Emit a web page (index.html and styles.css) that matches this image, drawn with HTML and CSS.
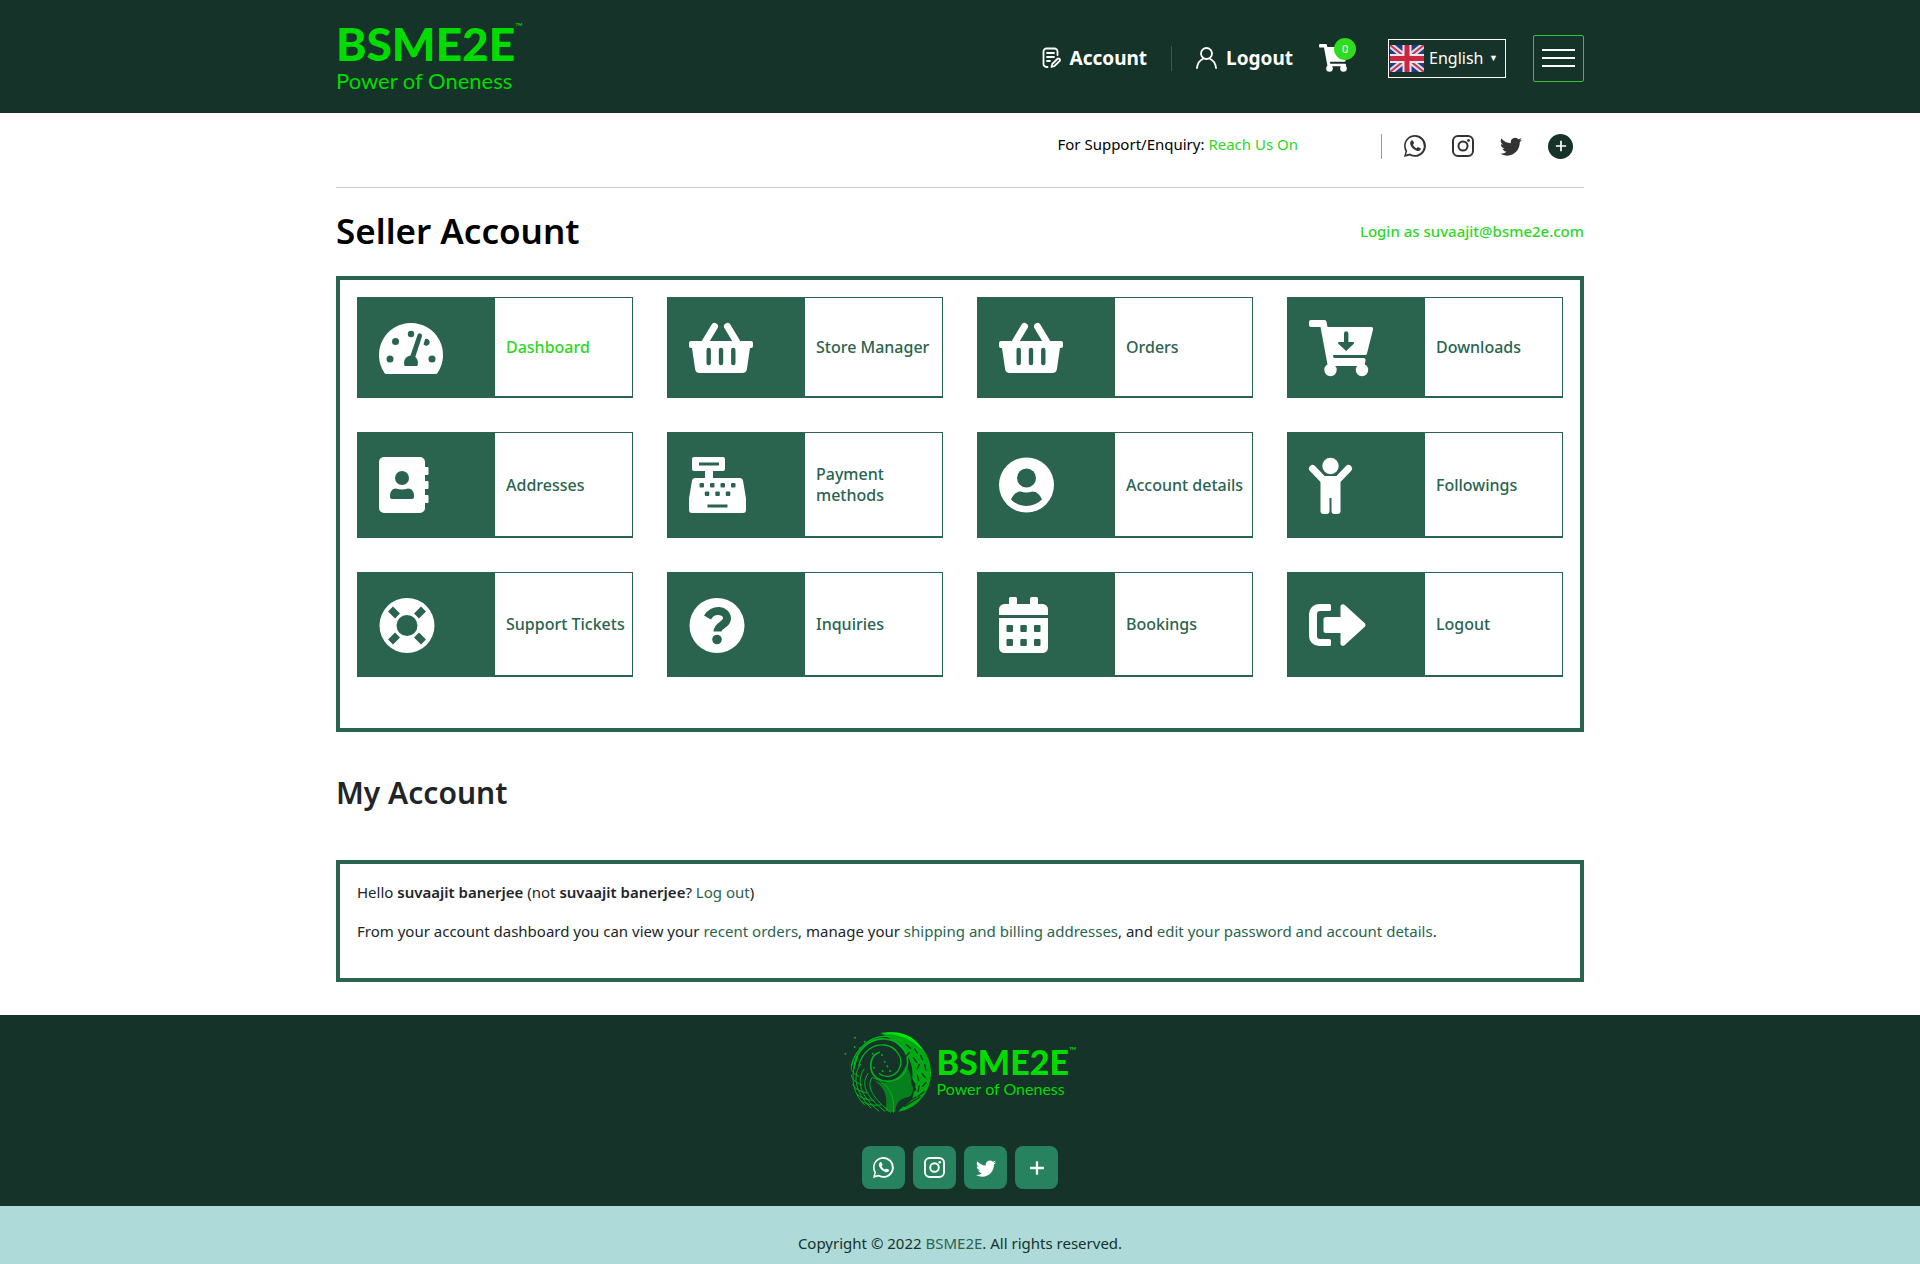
FILE: index.html
```html
<!DOCTYPE html>
<html lang="en">
<head>
<meta charset="utf-8">
<meta name="viewport" content="width=device-width, initial-scale=1">
<title>Seller Account – BSME2E</title>
<link rel="stylesheet" href="styles.css">
</head>
<body>
<svg class="sprite" aria-hidden="true">
  <symbol id="whatsapp" viewBox="0 0 16 16"><path d="M13.601 2.326A7.854 7.854 0 0 0 7.994 0C3.627 0 .068 3.558.064 7.926c0 1.399.366 2.76 1.057 3.965L0 16l4.204-1.102a7.933 7.933 0 0 0 3.79.965h.004c4.368 0 7.926-3.558 7.93-7.93A7.898 7.898 0 0 0 13.6 2.326zM7.994 14.521a6.573 6.573 0 0 1-3.356-.92l-.24-.144-2.894.654.866-2.433-.156-.251a6.56 6.56 0 0 1-1.007-3.505c0-3.626 2.957-6.584 6.591-6.584a6.56 6.56 0 0 1 4.66 1.931 6.557 6.557 0 0 1 1.928 4.66c-.004 3.639-2.961 6.592-6.592 6.592z"/><path d="M5.3 4.1c.5-.4 1-.3 1.300.300l.600 1.300c.100.300 0 .600-.200.800l-.500.500c.600 1.200 1.400 2 2.600 2.600l.500-.500c.200-.200.500-.300.800-.200l1.300.600c.600.300.700.800.300 1.300-.700.900-1.700 1.100-2.900.600-2.200-.900-3.800-2.500-4.500-4.500-.300-1.100-.100-2.100.700-2.800z"/></symbol>
  <symbol id="instagram" viewBox="0 0 22 22"><g fill="none" stroke="currentColor" stroke-width="2"><rect x="1" y="1" width="20" height="20" rx="5"/><circle cx="11" cy="11" r="4.500"/></g><circle cx="16.500" cy="5.500" r="1.400"/></symbol>
  <symbol id="twitter" viewBox="0 0 16 16"><path d="M5.026 15c6.038 0 9.341-5.003 9.341-9.334 0-.14 0-.282-.006-.422A6.685 6.685 0 0 0 16 3.542a6.658 6.658 0 0 1-1.889.518 3.301 3.301 0 0 0 1.447-1.817 6.533 6.533 0 0 1-2.087.793A3.286 3.286 0 0 0 7.875 6.03a9.325 9.325 0 0 1-6.767-3.429 3.289 3.289 0 0 0 1.018 4.382A3.323 3.323 0 0 1 .64 6.575v.045a3.288 3.288 0 0 0 2.632 3.218 3.203 3.203 0 0 1-.865.115 3.23 3.23 0 0 1-.614-.057 3.283 3.283 0 0 0 3.067 2.277A6.588 6.588 0 0 1 .78 13.58a6.32 6.32 0 0 1-.78-.045A9.344 9.344 0 0 0 5.026 15z"/></symbol>
  <symbol id="plus" viewBox="0 0 14 14"><path d="M6 1h2v5h5v2H8v5H6V8H1V6h5z"/></symbol>
  <symbol id="basket" viewBox="0 0 64 56"><path fill="none" stroke="currentColor" stroke-width="7" stroke-linecap="round" d="M25.500 6.500 15 24M38.500 6.500 49 24"/><path fill-rule="evenodd" d="M2 21h60a2 2 0 0 1 2 2v3a2 2 0 0 1-2 2h-1l-3 20.500a5 5 0 0 1-5 4.500H11a5 5 0 0 1-5-4.500L3 28H2a2 2 0 0 1-2-2v-3a2 2 0 0 1 2-2zM17.500 30v13a2.200 2.200 0 0 0 4.400 0V30a2.200 2.200 0 0 0-4.400 0zM29.800 30v13a2.200 2.200 0 0 0 4.400 0V30a2.200 2.200 0 0 0-4.400 0zM42.100 30v13a2.200 2.200 0 0 0 4.400 0V30a2.200 2.200 0 0 0-4.400 0z"/></symbol>
</svg>

<header class="site-header">
  <div class="container header-row">
    <a class="logo" href="#">
      <span class="logo-name">BSME2E<sup class="logo-tm">™</sup></span>
      <span class="logo-tag">Power of Oneness</span>
    </a>
    <nav class="header-nav" aria-label="Account">
      <a class="nav-link" href="#"><svg width="19" height="22" viewBox="0 0 19 22" fill="none" stroke="currentColor" stroke-width="1.800" stroke-linecap="round" stroke-linejoin="round"><path d="M5.500 20H4.500A3 3 0 0 1 1.500 17V4.500A3 3 0 0 1 4.500 1.500h8A3 3 0 0 1 15.500 4.500V8M5 6h7M5 10h7M5 14h3M9.500 20l.8-3 5-5a1.500 1.500 0 0 1 2.200 2.200L12.500 19z"/></svg>Account</a>
      <span class="nav-sep"></span>
      <a class="nav-link" href="#"><svg width="21" height="22" viewBox="0 0 21 22" fill="none" stroke="currentColor" stroke-width="1.800" stroke-linecap="round"><circle cx="10.500" cy="6.500" r="5.500"/><path d="M1 21c.6-5.500 3-8 6.500-9.500M20 21c-.6-5.500-3-8-6.500-9.500"/></svg>Logout</a>
    </nav>
    <a class="cart" href="#" aria-label="Cart">
      <svg width="30" height="28" viewBox="0 0 30 28" fill="currentColor"><path d="M1 0h5.500a1.500 1.500 0 0 1 1.500 1.200L8.300 3H28a1.200 1.200 0 0 1 1.200 1.500l-2.500 12a1.500 1.500 0 0 1-1.500 1.200H11l.3 2h14.500a1.200 1.200 0 0 1 1.200 1.500l-.3 1H9.500a1.200 1.200 0 0 1-1.200-1L5 3.500H1a1 1 0 0 1-1-1V1a1 1 0 0 1 1-1z"/><circle cx="10.500" cy="24.500" r="3.300"/><circle cx="24.500" cy="24.500" r="3.300"/></svg>
      <span class="cart-count">0</span>
    </a>
    <label class="language">
      <svg width="34" height="27" viewBox="0 0 34 27" aria-hidden="true"><path fill="#273a86" d="M0 0h34v27H0z"/><path stroke="#d9dcea" stroke-width="6" d="M0 0l34 27M34 0 0 27"/><path stroke="#c8374a" stroke-width="2" d="M0 0l34 27M34 0 0 27"/><path stroke="#e9e6ee" stroke-width="9" d="M17 0v27M0 13.500h34"/><path stroke="#cb2740" stroke-width="5" d="M17 0v27M0 13.500h34"/></svg>
      <select aria-label="Language"><option>English</option></select>
      <span class="language-arrow">▼</span>
    </label>
    <button class="menu-button" type="button" aria-label="Menu"><span></span><span></span><span></span></button>
  </div>
</header>

<main class="container">
  <div class="support-bar">
    <p>For Support/Enquiry: <a href="#">Reach Us On</a></p>
    <span class="support-sep"></span>
    <a class="support-icon" href="#" aria-label="WhatsApp"><svg width="22" height="22"><use href="#whatsapp"/></svg></a>
    <a class="support-icon" href="#" aria-label="Instagram"><svg width="22" height="22"><use href="#instagram"/></svg></a>
    <a class="support-icon" href="#" aria-label="Twitter"><svg width="22" height="22"><use href="#twitter"/></svg></a>
    <a class="support-icon support-more" href="#" aria-label="More"><svg width="12" height="12"><use href="#plus"/></svg></a>
  </div>

  <div class="title-row">
    <h1>Seller Account</h1>
    <a class="login-as" href="#">Login as suvaajit@bsme2e.com</a>
  </div>

  <nav class="panel cards" aria-label="Seller account">
    <a class="card active" href="#"><span class="card-icon"><svg width="64" height="56" viewBox="0 0 64 56"><path fill-rule="evenodd" d="M32 3a32 32 0 0 0-26.500 50c.5.600 1.200 1 2 1h49c.8 0 1.500-.4 2-1A32 32 0 0 0 32 3z"/><g fill="#2a644f"><circle cx="32" cy="14" r="3.200"/><circle cx="16.500" cy="21.500" r="3.500"/><path d="M46.200 19l-1.700 5.300a3.400 3.400 0 1 0 1.700-5.300z"/><circle cx="11" cy="39" r="3.500"/><circle cx="53" cy="39" r="3.500"/><path d="M25.500 46c-1.500-5.500 1-9.500 6-10.500L38.500 15a2.300 2.300 0 0 1 4.500 1.300l-6.700 20.700c2.700 2 3.300 5.500 2 9z"/></g></svg></span><span class="card-label">Dashboard</span></a>
    <a class="card" href="#"><span class="card-icon"><svg width="64" height="56"><use href="#basket"/></svg></span><span class="card-label">Store Manager</span></a>
    <a class="card" href="#"><span class="card-icon"><svg width="64" height="56"><use href="#basket"/></svg></span><span class="card-label">Orders</span></a>
    <a class="card" href="#"><span class="card-icon"><svg width="64" height="56" viewBox="0 0 64 56"><path d="M2 0h13.500a2 2 0 0 1 2 1.700L18.500 7H62a2 2 0 0 1 2 2.400l-6 24a2 2 0 0 1-2 1.600H24l.6 3H54.500a2 2 0 0 1 2 2.500l-1 5.500H20.500a2 2 0 0 1-2-1.600L11.500 7H2a2 2 0 0 1-2-2V2a2 2 0 0 1 2-2z"/><circle cx="21.500" cy="50" r="6.200"/><circle cx="53" cy="50" r="6.200"/><path fill="#2a644f" d="M35 13.500a2 2 0 0 1 4.400 0V22H44c1 0 1.400 1 .8 1.700L37.200 31l-7.900-7.300c-.6-.7-.2-1.700.8-1.700H35z"/></svg></span><span class="card-label">Downloads</span></a>

    <a class="card" href="#"><span class="card-icon"><svg width="64" height="56" viewBox="0 0 64 56"><path d="M5 0h36a5 5 0 0 1 5 5v5h2.500a1 1 0 0 1 1 1v6a1 1 0 0 1-1 1H46v6h2.500a1 1 0 0 1 1 1v6a1 1 0 0 1-1 1H46v6h2.500a1 1 0 0 1 1 1v6a1 1 0 0 1-1 1H46v5a5 5 0 0 1-5 5H5a5 5 0 0 1-5-5V5a5 5 0 0 1 5-5z"/><g fill="#2a644f"><circle cx="23" cy="21" r="7"/><path d="M17 31.500c4 1.300 8 1.300 12 0 4 0 6 3.500 6 7V40a2 2 0 0 1-2 2H13a2 2 0 0 1-2-2v-1.500c0-3.500 2-7 6-7z"/></g></svg></span><span class="card-label">Addresses</span></a>
    <a class="card" href="#"><span class="card-icon"><svg width="64" height="56" viewBox="0 0 64 56"><path d="M5 0h29a2 2 0 0 1 2 2v10a2 2 0 0 1-2 2H24v7h27a3 3 0 0 1 3 2.500l3 18V53a3 3 0 0 1-3 3H3a3 3 0 0 1-3-3V41.500l3-18A3 3 0 0 1 6 21h10v-7H5a2 2 0 0 1-2-2V2a2 2 0 0 1 2-2z"/><g fill="#2a644f"><path d="M10 5.500h20v3H10zM18.500 47.500h20v3h-20z"/><rect x="10.500" y="26" width="4.500" height="4.500" rx="1"/><rect x="21" y="26" width="4.500" height="4.500" rx="1"/><rect x="31.500" y="26" width="4.500" height="4.500" rx="1"/><rect x="42" y="26" width="4.500" height="4.500" rx="1"/><rect x="15.800" y="34.500" width="4.500" height="4.500" rx="1"/><rect x="26.300" y="34.500" width="4.500" height="4.500" rx="1"/><rect x="36.800" y="34.500" width="4.500" height="4.500" rx="1"/></g></svg></span><span class="card-label">Payment methods</span></a>
    <a class="card" href="#"><span class="card-icon"><svg width="64" height="56" viewBox="0 0 64 56"><circle cx="27.500" cy="28" r="27.500"/><g fill="#2a644f"><circle cx="27.500" cy="21" r="9.500"/><path d="M12 42.500c2-5 5.500-8 9.500-8 4 1.200 8 1.200 12 0 4 0 7.500 3 9.500 8-8.500 8.500-22.500 8.500-31 0z"/></g></svg></span><span class="card-label">Account details</span></a>
    <a class="card" href="#"><span class="card-icon"><svg width="64" height="56" viewBox="0 0 64 56"><circle cx="21.500" cy="9" r="8.200"/><path fill="none" stroke="currentColor" stroke-width="7" stroke-linecap="round" d="M3.500 11.500 14 22.500h15L39.500 11.500"/><path d="M11.500 20h20v34a3 3 0 0 1-3 3h-3a3 3 0 0 1-3-3V41h-2v13a3 3 0 0 1-3 3h-3a3 3 0 0 1-3-3z"/></svg></span><span class="card-label">Followings</span></a>

    <a class="card" href="#"><span class="card-icon"><svg width="64" height="56" viewBox="0 0 64 56"><circle cx="28" cy="28.500" r="27.500"/><circle cx="28" cy="28.500" r="10.500" fill="#2a644f"/><path stroke="#2a644f" stroke-width="7" d="M11.500 12l7 7M44.500 12l-7 7M11.500 45l7-7M44.500 45l-7-7"/></svg></span><span class="card-label">Support Tickets</span></a>
    <a class="card" href="#"><span class="card-icon"><svg width="64" height="56" viewBox="0 0 64 56"><circle cx="28" cy="28.500" r="27.500"/><path fill="none" stroke="#2a644f" stroke-width="8" d="M18.500 20.500C24 10.500 38 13 38 21.500c0 6.500-9.500 6.500-9.500 13"/><circle cx="28" cy="42.500" r="4.800" fill="#2a644f"/></svg></span><span class="card-label">Inquiries</span></a>
    <a class="card" href="#"><span class="card-icon"><svg width="64" height="56" viewBox="0 0 64 56"><path d="M0 18v-5.500A5.500 5.500 0 0 1 5.500 7H10V1.500A1.500 1.500 0 0 1 11.500 0h5A1.500 1.500 0 0 1 18 1.500V7h13V1.500A1.500 1.500 0 0 1 32.500 0h5A1.500 1.500 0 0 1 39 1.500V7h4.500a5.500 5.500 0 0 1 5.500 5.500V18zM0 21h49v29.500a5.500 5.500 0 0 1-5.500 5.500h-38A5.500 5.500 0 0 1 0 50.500z"/><g fill="#2a644f"><rect x="7.500" y="28" width="6.500" height="7" rx="1"/><rect x="21.300" y="28" width="6.500" height="7" rx="1"/><rect x="35" y="28" width="6.500" height="7" rx="1"/><rect x="7.500" y="42" width="6.500" height="7" rx="1"/><rect x="21.300" y="42" width="6.500" height="7" rx="1"/><rect x="35" y="42" width="6.500" height="7" rx="1"/></g></svg></span><span class="card-label">Bookings</span></a>
    <a class="card" href="#"><span class="card-icon"><svg width="64" height="56" viewBox="0 0 64 56"><path d="M20.500 7H10A10 10 0 0 0 0 17v22a10 10 0 0 0 10 10h10.500a1.500 1.500 0 0 0 1.500-1.500V43.500a1.500 1.500 0 0 0-1.500-1.500H11a3 3 0 0 1-3-3V17a3 3 0 0 1 3-3h9.500a1.500 1.500 0 0 0 1.500-1.500v-4A1.500 1.500 0 0 0 20.500 7zM35.500 7.800 55.500 26a2.500 2.500 0 0 1 0 4L35.500 48.200c-1.700 1.500-4 .3-4-1.700V36H17a2.500 2.500 0 0 1-2.500-2.500v-11A2.500 2.500 0 0 1 17 20h14.500V9.500c0-2 2.300-3.200 4-1.700z"/></svg></span><span class="card-label">Logout</span></a>
  </nav>

  <h2>My Account</h2>

  <section class="panel welcome">
    <p>Hello <strong>suvaajit banerjee</strong> (not <strong>suvaajit banerjee</strong>? <a href="#">Log out</a>)</p>
    <p>From your account dashboard you can view your <a href="#">recent orders</a>, manage your <a href="#">shipping and billing addresses</a>, and <a href="#">edit your password and account details</a>.</p>
  </section>
</main>

<footer class="site-footer">
  <div class="footer-main">
    <a class="footer-logo" href="#">
      <svg width="88" height="82" viewBox="12 18 264 246" fill="none" stroke="#00b41a" stroke-linecap="round" aria-hidden="true">
        <path d="M120 24c70-15 150 35 153 115 2 60-42 113-98 121 16-24 46-24 46-60 10-2 8-8 4-14 8-8-10-18-8-32 4-44-20-90-97-130z" fill="#00a814" stroke="none"/>
        <path d="M128 26c50-14 100 8 120 50-30-32-70-50-120-50z" fill="#00e60a" stroke="none"/>
        <path d="M100 164c30 20 76 8 96-40 24 20 12 50 24 64-2 8-2 22-14 28-24 2-40 20-40 44-10 2-20 0-30-4 10-40-2-70-36-92z" fill="#067f1c" stroke="none"/>
        <path stroke-width="5" d="M42 130c4-56 50-92 94-88 46 4 76 46 64 86-12 36-56 52-88 32-30-20-24-68 6-78"/>
        <path stroke-width="4" d="M56 122c12-46 48-66 78-62 34 4 56 38 46 66-10 28-42 36-62 20M34 122c14-54 60-92 110-88"/>
        <path stroke-width="3" d="M54 96c-20 40-26 100 20 144M62 118c-24 30-20 80 30 130M72 132c-24 36-12 80 44 126M84 146c-26 36 2 76 50 112M96 158c-20 26 6 66 56 104M36 120c-8 14 4 26 20 34M34 150c2 18 20 24 32 30M38 178c8 18 28 22 42 26M50 206c12 14 30 18 50 20M68 230c14 10 34 12 54 10M98 158c40 12 70 50 62 104"/>
        <path stroke-width="4" stroke="#123a25" d="M200 60l12 10M208 82l-10 12M224 72l8 12M220 98l10 14M242 92l6 12M238 118l-6 14M254 118l4 18M246 146l10 12M232 152l4 14M258 172l-10 12M238 182l-4 18M252 200l-18 14M228 216l-30 18M240 216l-46 28"/>
        <path stroke-width="6" d="M45 38h0M16 86h0M74 50h0M134 110h0M142 124h0M102 128h0M44 66h0M126 90h0M60 70h0M150 138h0M128 138h0M98 86h0"/>
      </svg>
      <span class="footer-wordmark">
        <span class="footer-name">BSME2E<sup class="logo-tm">™</sup></span>
        <span class="footer-tag">Power of Oneness</span>
      </span>
    </a>
    <div class="footer-social">
      <a href="#" aria-label="WhatsApp"><svg width="21" height="21"><use href="#whatsapp"/></svg></a>
      <a href="#" aria-label="Instagram"><svg width="21" height="21"><use href="#instagram"/></svg></a>
      <a href="#" aria-label="Twitter"><svg width="20" height="20"><use href="#twitter"/></svg></a>
      <a href="#" aria-label="More"><svg width="16" height="16"><use href="#plus"/></svg></a>
    </div>
  </div>
  <p class="copyright">Copyright © 2022 <a href="#">BSME2E</a>. All rights reserved.</p>
</footer>
</body>
</html>
```
FILE: styles.css
```css
* { box-sizing: border-box; }

body {
  margin: 0;
  font-family: "Noto Sans", "Open Sans", sans-serif;
  font-size: 15px;
  line-height: 24px;
  color: #212529;
  background: #fff;
}

a { color: #2a644f; text-decoration: none; }
p, h1, h2 { margin: 0; }
svg { display: block; fill: currentColor; flex: none; }
.sprite { position: absolute; width: 0; height: 0; }

.container {
  width: 100%;
  max-width: 1280px;
  margin: 0 auto;
  padding: 0 16px;
}

/* Header */
.site-header { background: #153328; color: #fff; }

.header-row {
  display: flex;
  align-items: center;
  min-height: 113px;
  padding-top: 3px;
}

.logo {
  display: flex;
  flex-direction: column;
  margin-right: auto;
  color: #00dc00;
  font-family: Lato, sans-serif;
}
.logo-name { font-size: 46px; font-weight: 900; line-height: 46px; }
.logo-tag { font-size: 22px; line-height: 28px; }
.logo-tm { font-size: 10px; font-weight: 400; line-height: 10px; vertical-align: top; }

.header-nav { display: flex; align-items: center; gap: 24px; }
.nav-link {
  display: flex;
  align-items: center;
  gap: 9px;
  color: #fff;
  font-size: 19px;
  font-weight: 700;
}
.nav-link svg { fill: none; }
.nav-sep { width: 1px; height: 25px; background: #2a644f; }

.cart { position: relative; margin: 0 39px 0 26px; color: #fff; }
.cart-count {
  position: absolute;
  top: -6px;
  left: 15px;
  width: 22px;
  height: 22px;
  border-radius: 50%;
  background: #2fdc1e;
  font-size: 11px;
  line-height: 22px;
  text-align: center;
}

.language {
  display: flex;
  align-items: center;
  height: 39px;
  margin-right: 27px;
  padding: 0 7px 0 1px;
  border: 1px solid #fff;
}
.language select {
  appearance: none;
  margin: 0 5px;
  padding: 0;
  border: 0;
  background: none;
  color: #fff;
  font: inherit;
  font-size: 16px;
}
.language-arrow { font-size: 9px; }

.menu-button {
  display: flex;
  flex-direction: column;
  align-items: center;
  justify-content: center;
  gap: 6px;
  width: 51px;
  height: 47px;
  padding: 0;
  border: 1px solid #3ac232;
  border-radius: 2px;
  background: none;
}
.menu-button span { width: 33px; height: 2px; background: #fff; }

/* Support bar */
.support-bar {
  display: flex;
  align-items: center;
  justify-content: flex-end;
  height: 75px;
  padding: 0 11px 8px 0;
  border-bottom: 1px solid #ccc;
  color: #000;
}
.support-bar p { padding-bottom: 4px; }
.support-bar p a, .login-as, .card.active { color: #2fd626; }
.support-sep { width: 1px; height: 25px; margin: 0 22px 0 83px; background: #999; }
.support-icon { margin-right: 26px; color: #333; }
.support-more {
  display: grid;
  place-items: center;
  width: 25px;
  height: 25px;
  margin-right: 0;
  border-radius: 50%;
  background: #153328;
  color: #fff;
}

/* Titles */
.title-row {
  display: flex;
  align-items: center;
  justify-content: space-between;
  height: 88px;
  padding-bottom: 3px;
}
h1 { font-size: 35px; line-height: 44px; font-weight: 600; color: #000; }
h2 { margin: 39px 0 45px; font-size: 30px; line-height: 44px; font-weight: 600; }
.login-as { font-weight: 500; }

/* Panels */
.panel { border: 4px solid #2a644f; padding: 17px; }

.cards {
  display: grid;
  grid-template-columns: repeat(4, 1fr);
  grid-template-rows: 101px 106px 105px;
  gap: 34px;
  padding-bottom: 51px;
}
.card {
  display: flex;
  border: 1px solid #2a644f;
  border-bottom-width: 2px;
  font-size: 16px;
  font-weight: 500;
  line-height: 21px;
}
.card-icon {
  display: flex;
  align-items: center;
  width: 50%;
  padding: 1px 0 0 21px;
  background: #2a644f;
  color: #fff;
}
.card-icon svg { overflow: visible; }
.card-label {
  display: flex;
  align-items: center;
  width: 50%;
  padding: 1px 0 0 11px;
}

.welcome { display: grid; gap: 15px; padding: 16px 17px 35px; }
.welcome strong { font-weight: 600; }

/* Footer */
.site-footer { margin-top: 33px; background: #153328; }
.footer-main {
  display: flex;
  flex-direction: column;
  align-items: center;
  gap: 33px;
  padding: 16px 16px 17px;
}
.footer-logo {
  display: flex;
  align-items: center;
  gap: 5px;
  color: #00dc00;
  font-family: Lato, sans-serif;
}
.footer-logo svg { fill: none; }
.footer-wordmark { display: flex; flex-direction: column; }
.footer-name { font-size: 34px; font-weight: 900; line-height: 34px; }
.footer-tag { font-size: 16px; line-height: 20px; }
.footer-social { display: flex; gap: 8px; }
.footer-social a {
  display: grid;
  place-items: center;
  width: 43px;
  height: 43px;
  border-radius: 8px;
  background: #27825f;
  color: #fff;
}
.copyright { padding: 25px 16px 9px; background: #afdada; text-align: center; color: #153328; }
```
